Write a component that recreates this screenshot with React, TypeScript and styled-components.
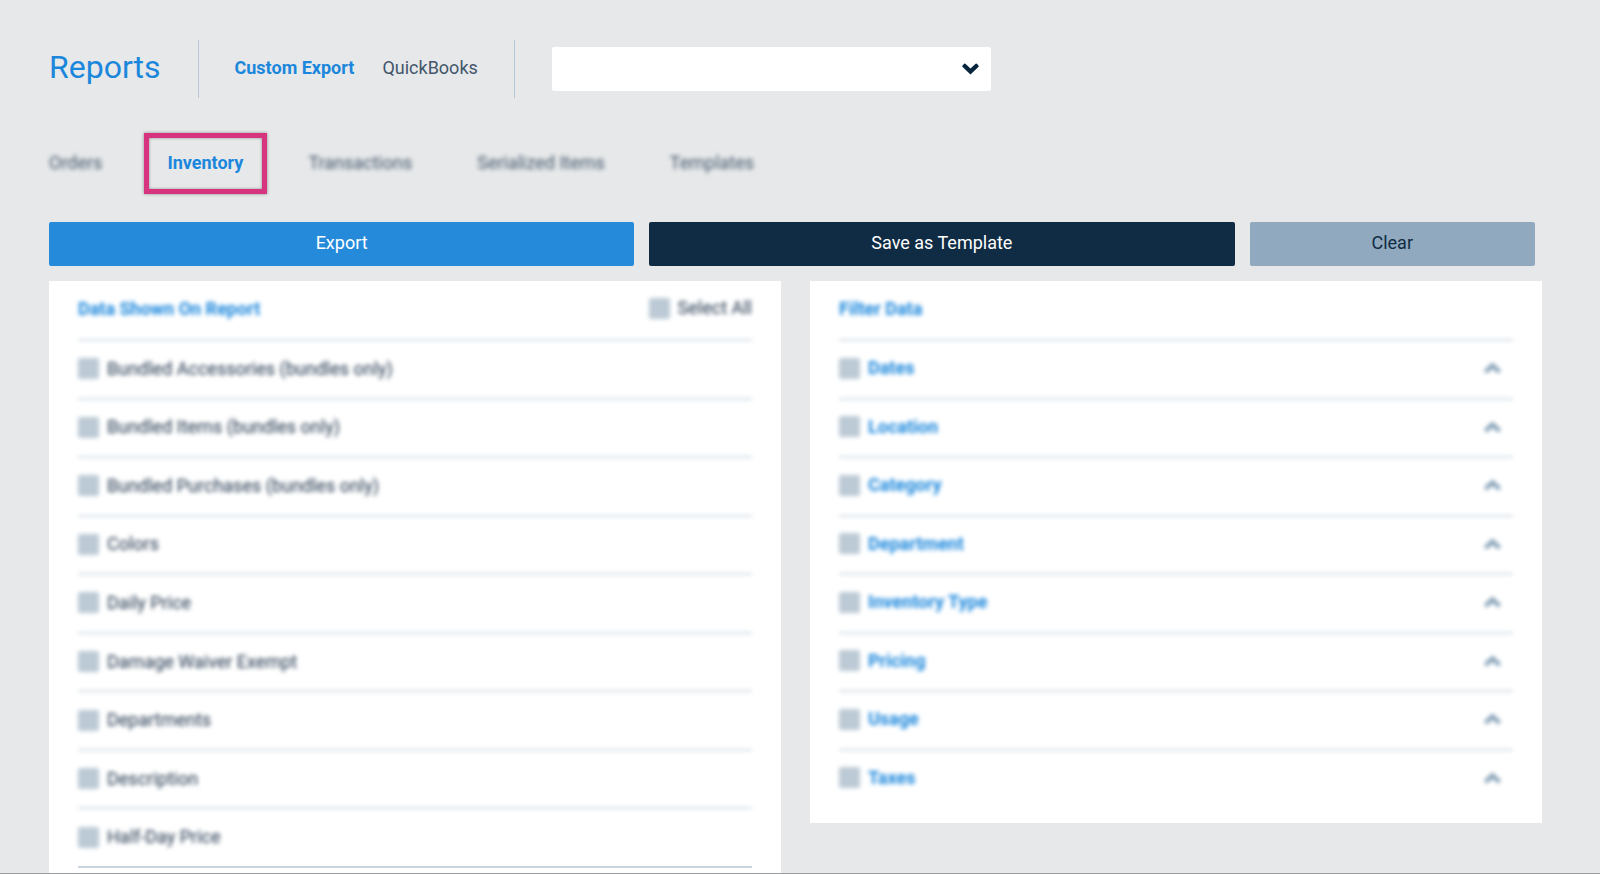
import React, { useState } from "react";
import styled, { createGlobalStyle, css } from "styled-components";

const color = {
  page: "#e6e8e9",
  blue: "#1b87dc",
  button: "#268adb",
  navy: "#0f2c44",
  steel: "#90a9bf",
  text: "#43566c",
  rowText: "#1b3048",
  line: "#d3dde7",
  box: "#bccad5",
  pink: "#d6347f",
};

const GlobalStyle = createGlobalStyle`
  *, *::before, *::after { box-sizing: border-box; }
  body {
    margin: 0;
    background: ${color.page};
    color: ${color.text};
    font-family: Roboto, "Liberation Sans", sans-serif;
    font-size: 18px;
    line-height: 24px;
  }
`;

const soft = css`
  filter: blur(2px);
`;

const Page = styled.main`
  min-height: 100vh;
  padding: 40px 58px 0 49px;
  border-bottom: 1px solid #9a9c9e;
`;

const Header = styled.header`
  display: flex;
  align-items: center;
  height: 58px;
`;

const Title = styled.h1`
  margin: 0;
  padding-right: 37px;
  font-size: 32px;
  font-weight: 400;
  line-height: 54px;
  height: 58px;
  color: ${color.blue};
`;

const ReportNav = styled.nav`
  display: flex;
  align-items: center;
  gap: 28px;
  height: 58px;
  padding: 0 36px 2px;
  border: solid #b5c7d8;
  border-width: 0 1px;
`;

const NavLink = styled.a<{ $active?: boolean }>`
  color: ${(p) => (p.$active ? color.blue : color.text)};
  font-weight: ${(p) => (p.$active ? 700 : 400)};
  text-decoration: none;
  white-space: nowrap;
`;

const SelectField = styled.div`
  display: grid;
  align-items: center;
  flex: 0 1 439px;
  margin-left: 37px;

  > * {
    grid-area: 1 / 1;
  }
  > svg {
    justify-self: end;
    margin-right: 12px;
    pointer-events: none;
  }
`;

const Select = styled.select`
  appearance: none;
  width: 100%;
  height: 44px;
  padding: 0 40px 0 14px;
  border: 0;
  border-radius: 2px;
  background: #fff;
  color: ${color.navy};
  font: inherit;
`;

const Tabs = styled.nav`
  display: flex;
  gap: 65px;
  margin-top: 53px;
`;

const Tab = styled(NavLink)`
  position: relative;
  ${(p) =>
    p.$active
      ? css`
          &::after {
            content: "";
            position: absolute;
            inset: -18px -24px -19px -23px;
            border: 5px solid ${color.pink};
            box-shadow: 0 0 3px #0006, inset 0 0 3px #0006;
          }
        `
      : soft}
`;

const Actions = styled.div`
  display: grid;
  grid-template-columns: 41fr 41fr 20fr;
  gap: 15px;
  margin: 47px 7px 15px 0;
`;

const Action = styled.button<{ $bg: string; $fg?: string }>`
  height: 44px;
  padding: 0 0 2px;
  border: 0;
  border-radius: 2px;
  background: ${(p) => p.$bg};
  color: ${(p) => p.$fg ?? "#fff"};
  font: inherit;
  cursor: pointer;
`;

const Columns = styled.div`
  display: grid;
  grid-template-columns: 1fr 1fr;
  align-items: start;
  gap: 29px;
`;

const Panel = styled.section<{ $bottom: number }>`
  padding: 0 29px ${(p) => p.$bottom}px;
  background: #fff;
`;

const PanelHead = styled.div`
  display: flex;
  align-items: center;
  justify-content: space-between;
  height: 60px;
  padding-bottom: 4px;
  border-bottom: 2px solid ${color.line};
  ${soft}
`;

const PanelTitle = styled.h2`
  margin: 0;
  padding-top: 2px;
  color: ${color.blue};
  font-size: 18px;
  font-weight: 700;
`;

const Rows = styled.ul<{ $height: number }>`
  display: grid;
  grid-auto-rows: 1fr;
  min-height: ${(p) => p.$height}px;
  margin: 0;
  padding: 0;
  list-style: none;
`;

const ClosingLine = styled.div`
  height: 2px;
  margin-top: -2px;
  background: #c8d4e0;
`;

const Row = styled.li<{ $raised?: boolean }>`
  display: flex;
  align-items: center;
  justify-content: space-between;
  padding-bottom: ${(p) => (p.$raised ? 2 : 1)}px;
  border-bottom: 2px solid ${color.line};
  ${soft}

  &:last-child {
    border-color: transparent;
  }
`;

const CheckLabel = styled.label<{ $strong?: boolean }>`
  display: flex;
  align-items: center;
  gap: 8px;
  color: ${(p) => (p.$strong ? color.blue : color.rowText)};
  font-weight: ${(p) => (p.$strong ? 700 : 400)};
`;

const Checkbox = styled.input`
  appearance: none;
  width: 21px;
  height: 21px;
  margin: 0;
  border-radius: 2px;
  background: ${color.box};

  &:checked {
    background: ${color.blue};
  }
`;

const Toggle = styled.button`
  display: flex;
  padding: 0 12px;
  border: 0;
  background: none;
  cursor: pointer;
`;

const Chevron = ({ up, tone }: { up?: boolean; tone: string }) => (
  <svg width="17" height="12" viewBox="0 0 17 12" aria-hidden="true">
    <path
      d={up ? "M8.5 0.5L17 8.5L14.2 11.5L8.5 6.5L2.8 11.5L0 8.5Z" : "M8.5 11.5L16.6 3.7Q17 3.2 16.6 2.7L14.9 0.8Q14.2 0.3 13.6 0.8L8.5 5.6L3.4 0.8Q2.8 0.3 2.1 0.8L0.4 2.7Q0 3.2 0.4 3.7Z"}
      fill={tone}
    />
  </svg>
);

const tabs = ["Orders", "Inventory", "Transactions", "Serialized Items", "Templates"];

const fields = [
  "Bundled Accessories (bundles only)",
  "Bundled Items (bundles only)",
  "Bundled Purchases (bundles only)",
  "Colors",
  "Daily Price",
  "Damage Waiver Exempt",
  "Departments",
  "Description",
  "Half-Day Price",
];

const filters = ["Dates", "Location", "Category", "Department", "Inventory Type", "Pricing", "Usage", "Taxes"];

export default function App() {
  const [selected, setSelected] = useState<string[]>([]);
  const toggle = (name: string) =>
    setSelected((s) => (s.includes(name) ? s.filter((n) => n !== name) : [...s, name]));

  return (
    <>
      <GlobalStyle />
      <Page>
        <Header>
          <Title>Reports</Title>
          <ReportNav aria-label="Report type">
            <NavLink href="#custom-export" $active>Custom Export</NavLink>
            <NavLink href="#quickbooks">QuickBooks</NavLink>
          </ReportNav>
          <SelectField>
            <Select aria-label="Template" defaultValue="">
              <option value="" />
            </Select>
            <Chevron tone="#06263f" />
          </SelectField>
        </Header>

        <Tabs aria-label="Report data">
          {tabs.map((t) => (
            <Tab key={t} href={`#${t}`} $active={t === "Inventory"}>{t}</Tab>
          ))}
        </Tabs>

        <Actions>
          <Action type="button" $bg={color.button}>Export</Action>
          <Action type="button" $bg={color.navy}>Save as Template</Action>
          <Action type="button" $bg={color.steel} $fg={color.navy} onClick={() => setSelected([])}>Clear</Action>
        </Actions>

        <Columns>
          <Panel $bottom={5}>
            <PanelHead>
              <PanelTitle>Data Shown On Report</PanelTitle>
              <CheckLabel>
                <Checkbox
                  type="checkbox"
                  checked={fields.every((f) => selected.includes(f))}
                  onChange={(e) => setSelected(e.target.checked ? fields : [])}
                />
                Select All
              </CheckLabel>
            </PanelHead>
            <Rows $height={527}>
              {fields.map((f) => (
                <Row key={f}>
                  <CheckLabel>
                    <Checkbox type="checkbox" checked={selected.includes(f)} onChange={() => toggle(f)} />
                    {f}
                  </CheckLabel>
                </Row>
              ))}
            </Rows>
            <ClosingLine />
          </Panel>

          <Panel $bottom={14}>
            <PanelHead>
              <PanelTitle>Filter Data</PanelTitle>
            </PanelHead>
            <Rows $height={468}>
              {filters.map((f) => (
                <Row key={f} $raised>
                  <CheckLabel $strong>
                    <Checkbox type="checkbox" />
                    {f}
                  </CheckLabel>
                  <Toggle type="button" aria-label={`Toggle ${f}`}>
                    <Chevron up tone="#839fb6" />
                  </Toggle>
                </Row>
              ))}
            </Rows>
          </Panel>
        </Columns>
      </Page>
    </>
  );
}
